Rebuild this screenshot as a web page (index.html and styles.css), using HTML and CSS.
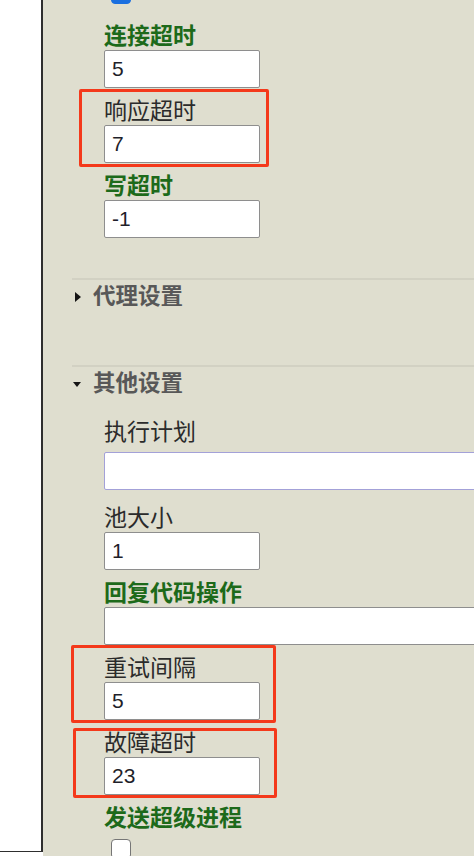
FILE: index.html
```html
<!DOCTYPE html>
<html lang="zh-CN">
<head>
    <meta charset="UTF-8">
    <meta name="viewport" content="width=device-width, initial-scale=1.0">
    <title>连接设置</title>
    <link rel="stylesheet" href="styles.css">
</head>
<body>
    <div class="page">
        <div class="gutter"></div>
        <main class="panel">
            <div class="fields">
                <div class="check-row top-check">
                    <input type="checkbox" class="check" checked>
                </div>
                <div class="field narrow">
                    <label class="lbl req">连接超时</label>
                    <input type="text" class="box" value="5">
                </div>
                <div class="field narrow">
                    <span class="mark mark-a"></span>
                    <label class="lbl">响应超时</label>
                    <input type="text" class="box" value="7">
                </div>
                <div class="field narrow">
                    <label class="lbl req">写超时</label>
                    <input type="text" class="box" value="-1">
                </div>
            </div>

            <section class="group closed">
                <h2 class="group-title"><span class="arrow right"></span>代理设置</h2>
            </section>

            <section class="group">
                <h2 class="group-title"><span class="arrow down"></span>其他设置</h2>
                <div class="fields">
                    <div class="field plan">
                        <label class="lbl">执行计划</label>
                        <input type="text" class="box wide focus" value="">
                    </div>
                    <div class="field narrow">
                        <label class="lbl">池大小</label>
                        <input type="text" class="box" value="1">
                    </div>
                    <div class="field">
                        <label class="lbl req">回复代码操作</label>
                        <input type="text" class="box wide" value="">
                    </div>
                    <div class="field narrow">
                        <span class="mark mark-b"></span>
                        <label class="lbl">重试间隔</label>
                        <input type="text" class="box" value="5">
                    </div>
                    <div class="field narrow">
                        <span class="mark mark-c"></span>
                        <label class="lbl">故障超时</label>
                        <input type="text" class="box" value="23">
                    </div>
                    <div class="field">
                        <label class="lbl req">发送超级进程</label>
                        <div class="check-row">
                            <input type="checkbox" class="check">
                        </div>
                    </div>
                </div>
            </section>
        </main>
    </div>
</body>
</html>
```

FILE: styles.css
```css
html, body {
    margin: 0;
    padding: 0;
    height: 100%;
    overflow: hidden;
}
body {
    background-color: #ffffff;
    font-family: "Liberation Sans", "Noto Sans CJK SC", sans-serif;
    color: #2b2b2b;
}
.page {
    display: flex;
    height: 856px;
}
.gutter {
    width: 41px;
    height: 851px;
    flex-shrink: 0;
    background-color: #ffffff;
    border-right: 2px solid #2e2e2e;
    border-bottom: 1px solid #2e2e2e;
}
.panel {
    flex: 1;
    background-color: #dfdecf;
    padding-left: 29px;
    min-width: 0;
    overflow: hidden;
}
.fields {
    padding-left: 32px;
}
.field {
    position: relative;
    margin-bottom: 9px;
}
.field.narrow {
    width: 156px;
}
.lbl {
    display: block;
    font-size: 23px;
    line-height: 28px;
    color: #2b2b2b;
    white-space: nowrap;
}
.lbl.req {
    font-weight: bold;
    color: #1d6a1a;
}
.box {
    display: block;
    box-sizing: border-box;
    width: 156px;
    height: 38px;
    margin: 0;
    padding: 0 7px;
    border: 1px solid #8e8e8e;
    border-radius: 2px;
    background-color: #ffffff;
    font-family: "Liberation Sans", sans-serif;
    font-size: 21px;
    color: #1f1f2a;
}
.box.wide {
    width: 420px;
}
.box.focus {
    border-color: #a3a1d8;
}
.field.plan {
    margin-top: 20px;
    margin-bottom: 14px;
}
.field.plan .lbl {
    margin-bottom: 6px;
}

/* checkboxes */
.check-row {
    height: 20px;
}
.top-check {
    margin-top: -16px;
    margin-bottom: 18px;
}
.check {
    appearance: none;
    -webkit-appearance: none;
    display: block;
    box-sizing: border-box;
    width: 20px;
    height: 20px;
    margin: 0 0 0 7px;
    border: 1px solid #767676;
    border-radius: 4px;
    background-color: #ffffff;
}
.check:checked {
    background-color: #1a6fe0;
    border-color: #1a6fe0;
}
.field .check-row {
    margin-top: 7px;
}

/* collapsible groups */
.group {
    border-top: 2px solid #d2d1c3;
}
.fields + .group {
    margin-top: 40px;
}
.group.closed {
    padding-bottom: 54px;
}
.group-title {
    display: flex;
    align-items: center;
    margin: 3px 0 0;
    padding-left: 3px;
    font-size: 22.5px;
    line-height: 28px;
    font-weight: bold;
    color: #585858;
}
.arrow {
    display: inline-block;
    width: 0;
    height: 0;
    margin-right: 12px;
}
.arrow.right {
    border-top: 5px solid transparent;
    border-bottom: 5px solid transparent;
    border-left: 6px solid #151515;
}
.arrow.down {
    border-left: 4px solid transparent;
    border-right: 4px solid transparent;
    border-top: 5px solid #151515;
    margin-left: -2px;
}

/* red highlight boxes drawn over the form */
.mark {
    position: absolute;
    border: 3px solid #f4391b;
    border-radius: 2px;
    pointer-events: none;
}
.mark-a {
    left: -25px;
    top: -8px;
    right: -9px;
    bottom: -4px;
}
.mark-b {
    left: -33px;
    top: -9px;
    right: -16px;
    bottom: -3px;
}
.mark-c {
    left: -31px;
    top: -1px;
    right: -17px;
    bottom: -3px;
}
```
